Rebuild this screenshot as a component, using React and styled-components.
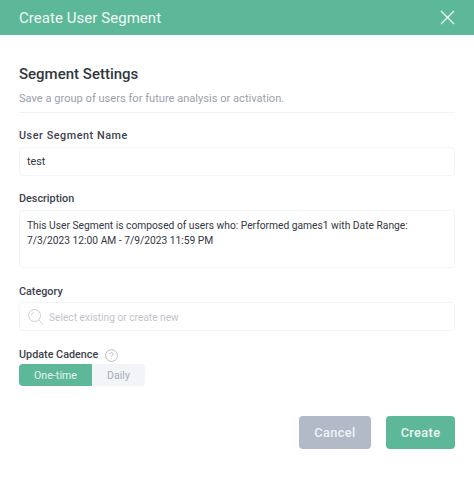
import React from "react";
import styled, { createGlobalStyle } from "styled-components";

const Global = createGlobalStyle`
  html, body { margin: 0; padding: 0; background: #fff; }
  * { box-sizing: border-box; }
  body { font-family: "Roboto", "Liberation Sans", sans-serif; }
`;
const Page = styled.div`
  width: 474px; height: 477px; background: #fff; overflow: hidden;
  display: flex; flex-direction: column;
`;
const Header = styled.header`
  height: 35px; flex: none; background: #5cb898; color: #f2faf6;
  display: flex; align-items: center; justify-content: space-between;
  padding: 0 19px 0 19px;
  font-size: 15px; letter-spacing: 0.05px;
`;
const Body = styled.main`
  padding: 30px 19px 0; display: flex; flex-direction: column;
`;
const Title = styled.h2`
  margin: 0; font-size: 15px; line-height: 18px; font-weight: 500; color: #33373f; letter-spacing: 0;
`;
const Sub = styled.p`
  margin: 8px 0 0; font-size: 11.1px; line-height: 16px; color: #9aa1ae; letter-spacing: 0;
  padding-bottom: 5px; border-bottom: 1px solid #f1f2f4;
`;
const Label = styled.label`
  display: flex; align-items: center; gap: 7px;
  font-size: 10.8px; line-height: 14px; font-weight: 500; color: #3d424c;
  margin-top: ${p => p.$top}px; letter-spacing: ${p => p.$track || 0}px;
`;
const Field = styled.div`
  margin-top: ${p => p.$top}px; height: ${p => p.$h}px;
  border: 1px solid #f3f4f6; border-radius: 4px; background: #fff;
  padding: 0 7px; font-size: 10.8px; color: #33373f;
  display: flex; align-items: center;
`;
const Area = styled(Field)`
  display: block; padding-top: 7px; line-height: 15px; font-size: 10.25px;
`;
const Placeholder = styled.span`
  color: #bfc4cc; margin-left: 5px; padding-top: 1px; font-size: 10.2px;
`;
const Segmented = styled.div`
  display: flex; width: 126px; height: 22px; margin-top: 2px; border-radius: 4px; overflow: hidden;
`;
const Seg = styled.div`
  width: ${p => p.$w}px; display: flex; align-items: center; justify-content: center;
  font-size: 10.5px; letter-spacing: 0.1px;
  background: ${p => (p.$on ? "#5cb898" : "#f2f4f7")};
  color: ${p => (p.$on ? "#e8f6f0" : "#a6acb8")};
`;
const Actions = styled.div`
  display: flex; justify-content: flex-end; gap: 15px; margin-top: 30px;
`;
const Button = styled.button`
  height: 33px; width: ${p => p.$w}px; border: 0; border-radius: 4px;
  background: ${p => p.$bg}; color: #f0f3f5;
  font: 500 12.8px "Roboto", "Liberation Sans", sans-serif; letter-spacing: 0.35px;
`;

export default function App() {
  return (
    <Page>
      <Global />
      <Header>
        Create User Segment
        <svg width="15" height="15" viewBox="0 0 15 15" fill="none" stroke="#f2faf6" strokeWidth="1.3">
          <path d="M1 1l13 13M14 1L1 14" />
        </svg>
      </Header>
      <Body>
        <Title>Segment Settings</Title>
        <Sub>Save a group of users for future analysis or activation.</Sub>
        <Label $top={16} $track={0.55}>User Segment Name</Label>
        <Field $top={4} $h={29}>test</Field>
        <Label $top={16}>Description</Label>
        <Area $top={4} $h={58}>
          This User Segment is composed of users who: Performed games1 with Date Range: 7/3/2023 12:00 AM - 7/9/2023 11:59 PM
        </Area>
        <Label $top={17}>Category</Label>
        <Field $top={3} $h={29}>
          <svg width="17" height="18" viewBox="0 0 17 18" fill="none" stroke="#c3c8cf" strokeWidth="0.9">
            <circle cx="7.5" cy="7.5" r="6" />
            <path d="M12 12l4 4.5M4.5 7a3 3 0 0 1 2-2.5" />
          </svg>
          <Placeholder>Select existing or create new</Placeholder>
        </Field>
        <Label $top={17}>
          Update Cadence
          <svg width="13" height="13" viewBox="0 0 13 13" fill="none" stroke="#a9afb9" strokeWidth="0.8">
            <circle cx="6.5" cy="6.5" r="5.9" />
            <path d="M4.9 5.2a1.6 1.6 0 1 1 2.5 1.3c-.6.4-.9.7-.9 1.4M6.5 9.2v.8" />
          </svg>
        </Label>
        <Segmented>
          <Seg $on $w={73}>One-time</Seg>
          <Seg $w={53}>Daily</Seg>
        </Segmented>
        <Actions>
          <Button $w={72} $bg="#b2b9c7">Cancel</Button>
          <Button $w={69} $bg="#5cb898">Create</Button>
        </Actions>
      </Body>
    </Page>
  );
}
